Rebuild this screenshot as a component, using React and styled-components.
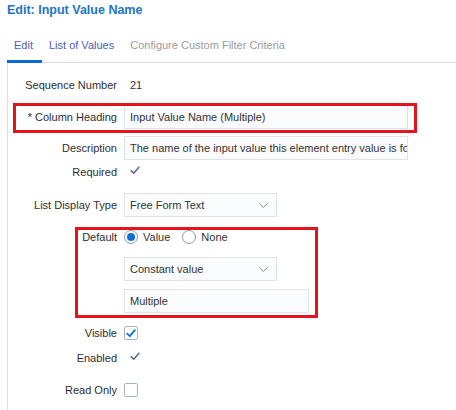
import React from 'react';
import styled, { createGlobalStyle } from 'styled-components';

const GlobalStyle = createGlobalStyle`
  body {
    margin: 0;
    background: #fff;
    font-family: "Liberation Sans", Arial, sans-serif;
    color: #333;
  }
`;

const Page = styled.div`
  width: 456px;
  height: 410px;
  padding-left: 7px;
  box-sizing: border-box;
  overflow: hidden;
`;

const Title = styled.h1`
  margin: 0;
  font-size: 12.5px;
  line-height: 20px;
  font-weight: bold;
  color: #2174c6;
`;

const TabBar = styled.div`
  display: flex;
  height: 43px;
  box-sizing: border-box;
  border-bottom: 1px solid #d7dfe5;
`;

const Tab = styled.div`
  display: flex;
  align-items: flex-end;
  height: 43px;
  margin-bottom: -1px;
  box-sizing: border-box;
  padding: 0 9px 8px 7px;
  font-size: 11px;
  line-height: 14px;
  color: ${(p) => (p.$disabled ? '#9b9b9b' : '#4d5cb4')};
  border-bottom: 3px solid ${(p) => (p.$active ? '#0a6cd0' : 'transparent')};
`;

const Panel = styled.div`
  display: flex;
  flex-direction: column;
  padding-top: 10px;
  border-left: 1px solid #d7dfe5;
  height: 347px;
  box-sizing: border-box;
`;

// red annotation frame drawn over a group of rows
const Highlight = styled.div`
  position: relative;
  display: flex;
  flex-direction: column;
  margin-top: ${(p) => p.$gap || 0}px;

  &::after {
    content: '';
    position: absolute;
    top: ${(p) => p.$inset[0]}px;
    right: ${(p) => p.$inset[1]}px;
    bottom: ${(p) => p.$inset[2]}px;
    left: ${(p) => p.$inset[3]}px;
    border: 3px solid #e5131d;
    pointer-events: none;
  }
`;

const Row = styled.div`
  display: grid;
  grid-template-columns: 109px auto;
  column-gap: 7px;
  align-items: center;
  min-height: 24px;
  margin-top: ${(p) => p.$gap || 0}px;
`;

const Label = styled.div`
  text-align: right;
  font-size: 11px;
  line-height: 14px;
  color: #2e2e2e;
  white-space: nowrap;
`;

const Value = styled.div`
  font-size: 11px;
  line-height: 14px;
  color: #333;
  padding-left: 6px;
`;

const TextBox = styled.div`
  width: ${(p) => p.$width}px;
  height: 24px;
  box-sizing: border-box;
  border: 1px solid #dde3e7;
  background: #fbfcfd;
  padding: 0 4px 0 5px;
  font-size: 11px;
  line-height: 22px;
  color: #333;
  white-space: nowrap;
  overflow: hidden;
`;

const Select = styled(TextBox)`
  display: flex;
  align-items: center;
  justify-content: space-between;
  padding-right: 8px;
`;

const Controls = styled.div`
  display: flex;
  align-items: center;
`;

const Radio = styled.span`
  display: inline-flex;
  align-items: center;
  justify-content: center;
  width: 14px;
  height: 14px;
  box-sizing: border-box;
  border-radius: 50%;
  border: 1px solid #8d99a4;
  background: #fff;
  margin-right: 5px;

  &::after {
    content: '';
    width: 8px;
    height: 8px;
    border-radius: 50%;
    background: ${(p) => (p.$checked ? '#0f6fd2' : 'transparent')};
  }
`;

const RadioText = styled.span`
  font-size: 11px;
  line-height: 14px;
  color: #333;
  margin-right: 12px;
`;

const Checkbox = styled.span`
  display: inline-flex;
  align-items: center;
  justify-content: center;
  width: 14px;
  height: 14px;
  box-sizing: border-box;
  border: 1px solid #a8b4bf;
  border-radius: 2px;
  background: #fff;
`;

const ReadOnlyCheck = styled.span`
  display: inline-flex;
  padding-left: 6px;
  margin-top: -4px;
`;

const Chevron = () => (
  <svg width="9" height="5" viewBox="0 0 9 5">
    <path d="M0.5 0.5 L4.5 4.3 L8.5 0.5" fill="none" stroke="#80898f" strokeWidth="1" />
  </svg>
);

const Tick = ({ color, weight = 1.8 }) => (
  <svg width="10" height="9" viewBox="0 0 10 9">
    <path d="M1.2 4.6 L3.8 7.2 L8.8 1.2" fill="none" stroke={color} strokeWidth={weight} strokeLinecap="round" strokeLinejoin="round" />
  </svg>
);

export default function App() {
  return (
    <Page>
      <GlobalStyle />
      <Title>Edit: Input Value Name</Title>
      <TabBar>
        <Tab $active>Edit</Tab>
        <Tab>List of Values</Tab>
        <Tab $disabled>Configure Custom Filter Criteria</Tab>
      </TabBar>
      <Panel>
        <Row>
          <Label>Sequence Number</Label>
          <Value>21</Value>
        </Row>

        <Highlight $gap={8} $inset={[-2, 39, -4, 5]}>
          <Row>
            <Label>* Column Heading</Label>
            <TextBox $width={284}>Input Value Name (Multiple)</TextBox>
          </Row>
        </Highlight>

        <Row $gap={7}>
          <Label>Description</Label>
          <TextBox $width={284}>The name of the input value this element entry value is fo</TextBox>
        </Row>
        <Row>
          <Label>Required</Label>
          <ReadOnlyCheck><Tick color="#5a6698" weight={1.5} /></ReadOnlyCheck>
        </Row>
        <Row $gap={9}>
          <Label>List Display Type</Label>
          <Select $width={153}>
            <span>Free Form Text</span>
            <Chevron />
          </Select>
        </Row>

        <Highlight $gap={8} $inset={[2, 138, -5, 67]}>
          <Row>
            <Label>Default</Label>
            <Controls>
              <Radio $checked />
              <RadioText>Value</RadioText>
              <Radio />
              <RadioText>None</RadioText>
            </Controls>
          </Row>
          <Row $gap={8}>
            <span />
            <Select $width={153}>
              <span>Constant value</span>
              <Chevron />
            </Select>
          </Row>
          <Row $gap={8}>
            <span />
            <TextBox $width={185}>Multiple</TextBox>
          </Row>
        </Highlight>

        <Row $gap={8}>
          <Label>Visible</Label>
          <Controls>
            <Checkbox><Tick color="#0f6fd2" /></Checkbox>
          </Controls>
        </Row>
        <Row $gap={1}>
          <Label>Enabled</Label>
          <ReadOnlyCheck><Tick color="#5a6698" weight={1.5} /></ReadOnlyCheck>
        </Row>
        <Row $gap={8}>
          <Label>Read Only</Label>
          <Controls>
            <Checkbox />
          </Controls>
        </Row>
      </Panel>
    </Page>
  );
}
